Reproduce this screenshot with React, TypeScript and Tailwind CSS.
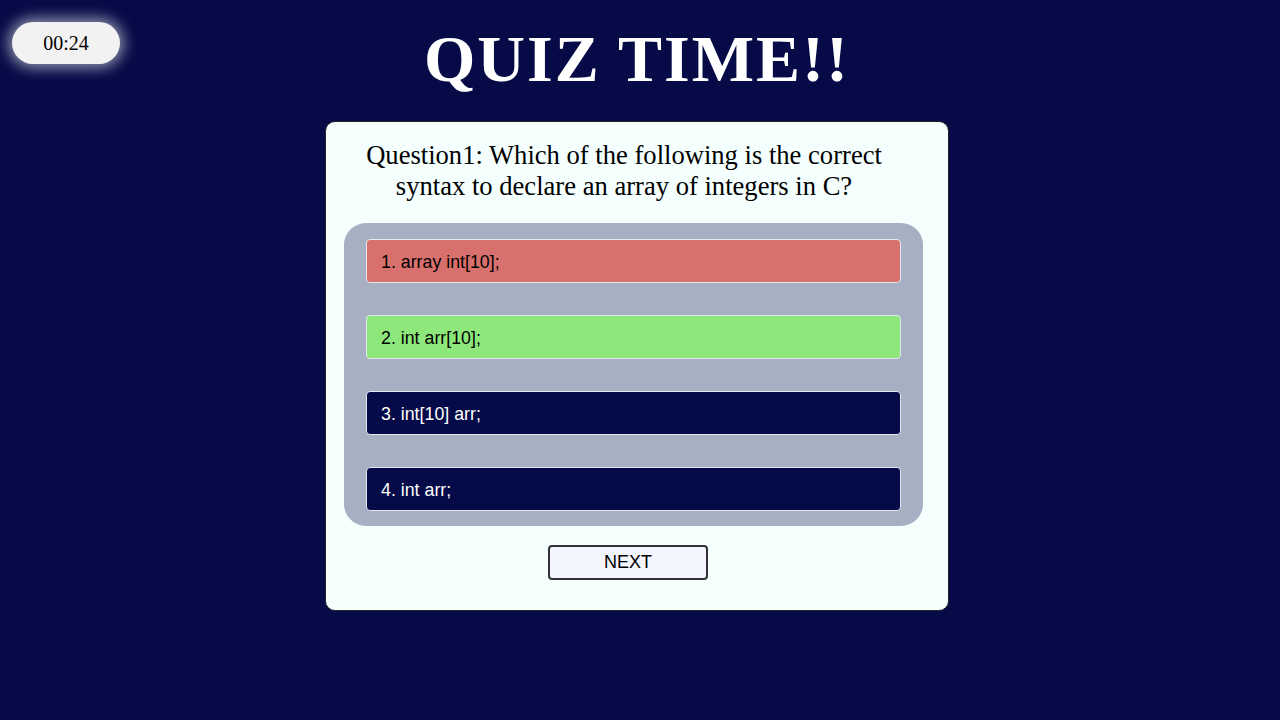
const options = [
  { text: "1. array int[10];", tone: "bg-[#d8716d] text-black" },
  { text: "2. int arr[10];", tone: "bg-[#8ee77a] text-black" },
  { text: "3. int[10] arr;", tone: "bg-[#050a48] text-white" },
  { text: "4. int arr;", tone: "bg-[#050a48] text-white" },
];

export default function App() {
  return (
    <div className="min-h-screen w-full bg-[#060b47] relative">
      <div className="absolute left-[12px] top-[22px] w-[108px] h-[42px] rounded-full bg-[#f2f2f2] shadow-[0_0_14px_4px_rgba(255,255,255,0.55)] flex items-center justify-center font-['Liberation_Serif',serif] text-[20px] text-black">
        00:24
      </div>

      <div className="flex flex-col items-center pt-[20px]">
        <h1 className="font-['Liberation_Serif',serif] font-bold text-white text-[66px] leading-[78px] tracking-[2px] mr-[6px]">
          QUIZ TIME!!
        </h1>

        <div className="mt-[23px] w-[624px] h-[490px] ml-[-6px] bg-[#f4fffe] rounded-[10px] border border-[#222] flex flex-col items-center">
          <h2 className="mt-[18px] pl-[8px] pr-[34px] text-center font-['Liberation_Serif',serif] text-[26.6px] leading-[31px] text-black whitespace-nowrap">
            Question1: Which of the following is the correct
            <br />
            syntax to declare an array of integers in C?
          </h2>

          <div className="mt-[21px] w-[579px] ml-[18px] self-start bg-[#a6b0c2] rounded-[22px] px-[22px] pt-[16px] pb-[15px] flex flex-col gap-[32px]">
            {options.map((o) => (
              <div
                key={o.text}
                className={`h-[44px] rounded-[4px] border border-[#e6e8ef] flex items-center pl-[14px] pt-[3px] font-['Liberation_Sans',Arial,sans-serif] text-[17.8px] ${o.tone}`}
              >
                {o.text}
              </div>
            ))}
          </div>

          <button
            type="button"
            className="mt-[19px] mr-[18px] w-[160px] h-[35px] rounded-[4px] border-2 border-[#333] bg-[#f3f6fe] font-['Liberation_Sans',Arial,sans-serif] text-[18px] text-black"
          >
            NEXT
          </button>
        </div>
      </div>
    </div>
  );
}
